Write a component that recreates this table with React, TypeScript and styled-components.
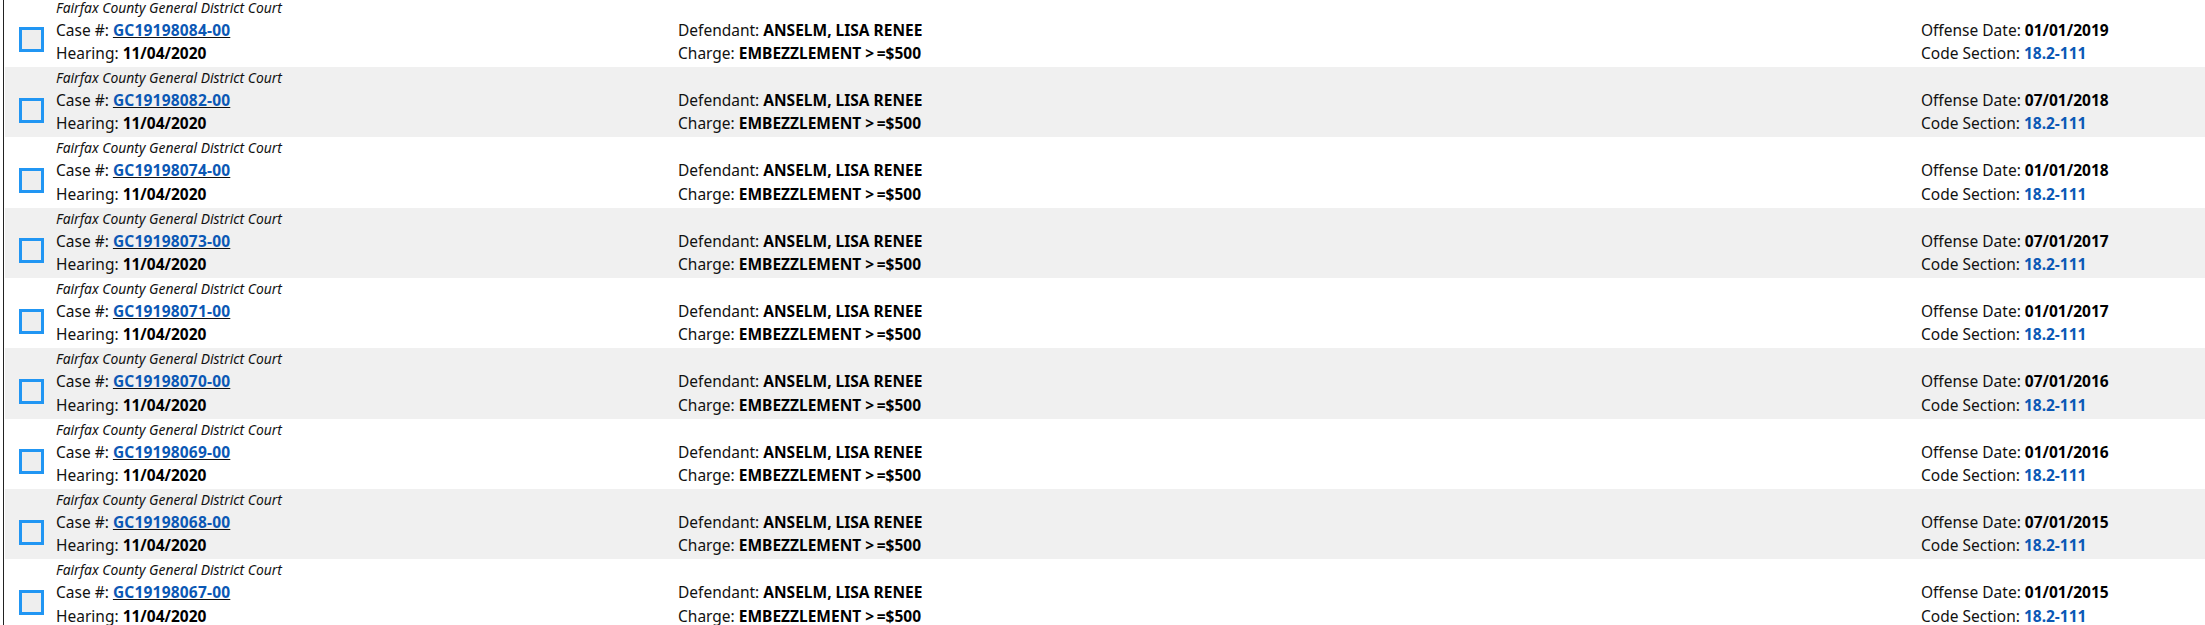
import React from 'react';
import styled, { createGlobalStyle } from 'styled-components';

const GlobalStyle = createGlobalStyle`
  html, body {
    margin: 0;
    padding: 0;
    background: #fff;
    overflow: hidden;
  }
  body {
    font-family: "Noto Sans", "Open Sans", sans-serif;
    color: #111;
  }
`;

const List = styled.div`
  margin-top: -3.33px;
  margin-left: 3px;
  border-left: 1px solid #222;
  padding-left: 1px;
`;

const Row = styled.div<{ $shaded: boolean }>`
  display: grid;
  grid-template-columns: 51px 622px 1243px 1fr;
  grid-template-rows: 22px 23.4px 24.93px;
  background: ${p => (p.$shaded ? '#f0f0f0' : '#fff')};
  font-size: 15.5px;
  line-height: 23.4px;
`;

const CheckCell = styled.div`
  grid-column: 1;
  grid-row: 1 / span 3;
  padding: 30.7px 0 0 14px;
`;

const Box = styled.div`
  width: 19px;
  height: 19px;
  border: 3px solid #2196f3;
  background: #eeeeee;
`;

const Court = styled.div`
  grid-column: 2;
  grid-row: 1;
  font-size: 13.9px;
  font-style: italic;
  line-height: 22px;
  white-space: nowrap;
`;

const Field = styled.div<{ $col: number; $row: number }>`
  grid-column: ${p => p.$col};
  grid-row: ${p => p.$row};
  white-space: nowrap;
`;

const Strong = styled.b`
  font-weight: 700;
  color: #000;
`;

const CaseLink = styled.a`
  font-weight: 700;
  color: #0b58b5;
  letter-spacing: 0.2px;
  text-decoration: underline;
  text-decoration-color: #111;
`;

const Code = styled.span`
  font-weight: 700;
  color: #0b58b5;
`;

type CaseItem = { num: string; offense: string };

const cases: CaseItem[] = [
  { num: 'GC19198084-00', offense: '01/01/2019' },
  { num: 'GC19198082-00', offense: '07/01/2018' },
  { num: 'GC19198074-00', offense: '01/01/2018' },
  { num: 'GC19198073-00', offense: '07/01/2017' },
  { num: 'GC19198071-00', offense: '01/01/2017' },
  { num: 'GC19198070-00', offense: '07/01/2016' },
  { num: 'GC19198069-00', offense: '01/01/2016' },
  { num: 'GC19198068-00', offense: '07/01/2015' },
  { num: 'GC19198067-00', offense: '01/01/2015' },
];

const App: React.FC = () => (
  <>
    <GlobalStyle />
    <List>
      {cases.map((c, i) => (
        <Row key={c.num} $shaded={i % 2 === 1}>
          <CheckCell>
            <Box />
          </CheckCell>
          <Court>Fairfax County General District Court</Court>
          <Field $col={2} $row={2}>
            Case #: <CaseLink href="#">{c.num}</CaseLink>
          </Field>
          <Field $col={2} $row={3}>
            Hearing: <Strong>11/04/2020</Strong>
          </Field>
          <Field $col={3} $row={2}>
            Defendant: <Strong>ANSELM, LISA RENEE</Strong>
          </Field>
          <Field $col={3} $row={3}>
            Charge: <Strong>EMBEZZLEMENT &gt;&#8201;=$500</Strong>
          </Field>
          <Field $col={4} $row={2}>
            Offense Date: <Strong>{c.offense}</Strong>
          </Field>
          <Field $col={4} $row={3}>
            Code Section: <Code>18.2-111</Code>
          </Field>
        </Row>
      ))}
    </List>
  </>
);

export default App;
